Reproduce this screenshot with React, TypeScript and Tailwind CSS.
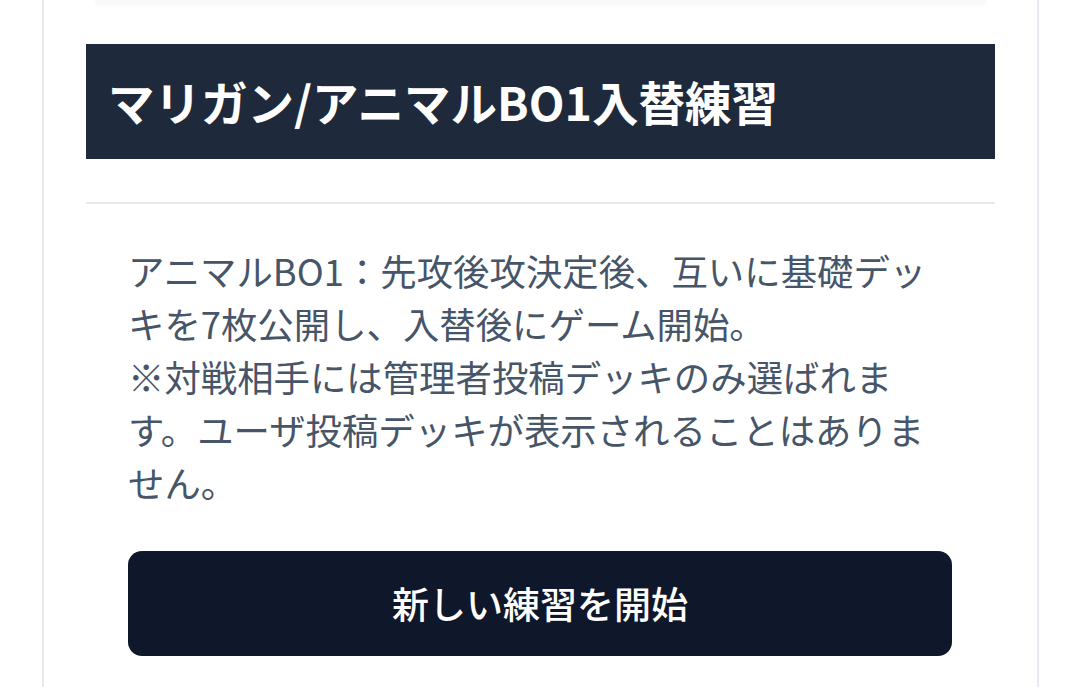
import React from "react";

export default function App() {
  return (
    <div
      className="min-h-[687px] w-[1080px] bg-white overflow-hidden"
      style={{ fontFamily: '"Noto Sans CJK JP", "Noto Sans", sans-serif' }}
    >
      <div className="ml-[42px] w-[997px] h-[687px] border-x-2 border-[#e6eaf2] bg-white px-[42px]">
        <div className="mx-[9px] h-[4px] rounded-b-[14px] bg-[#f8f9fa] shadow-[0_1px_2px_rgba(0,0,0,0.03)]" />
        <div className="mt-[40px] h-[115px] bg-[#1e293b] flex items-center pl-[22px]">
          <h2 className="text-white font-bold text-[46.5px] leading-none">
            マリガン/アニマルBO1入替練習
          </h2>
        </div>
        <div className="mt-[43px] h-[2px] bg-[#e5e9f0]" />
        <div className="pl-[42px] pr-[43px]">
          <p className="mt-[40px] text-[36.4px] leading-[53px] text-[#475569]">
            アニマルBO1：先攻後攻決定後、互いに基礎デッキを7枚公開し、入替後にゲーム開始。
            <br />
            ※対戦相手には管理者投稿デッキのみ選ばれます。ユーザ投稿デッキが表示されることはありません。
          </p>
          <button className="mt-[42px] w-full h-[105px] rounded-[14px] bg-[#0f172a] text-white text-[37px] font-medium flex items-center justify-center">
            新しい練習を開始
          </button>
        </div>
      </div>
    </div>
  );
}
